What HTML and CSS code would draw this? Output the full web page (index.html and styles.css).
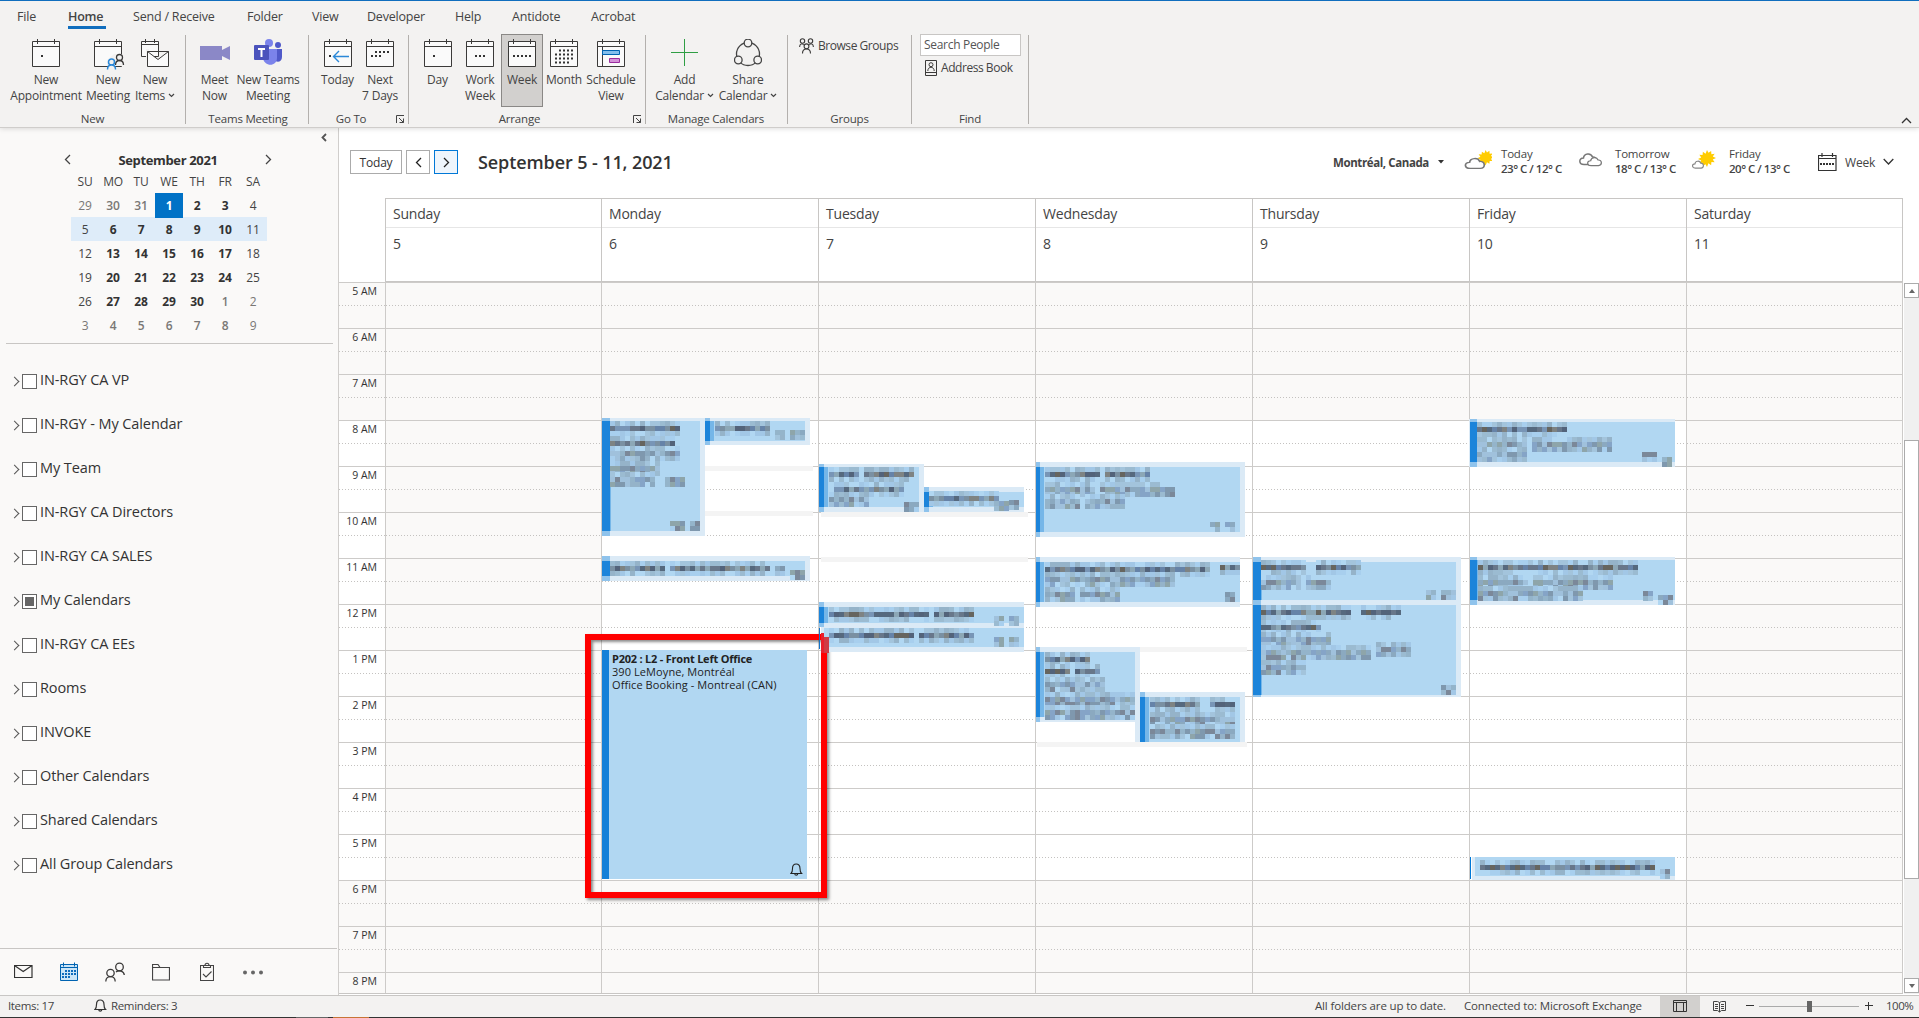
FILE: index.html
```html
<!DOCTYPE html>
<html lang="en">
<head>
<meta charset="utf-8">
<title>Calendar</title>
<link rel="stylesheet" href="styles.css">
</head>
<body>
<svg class="defs" width="0" height="0">
  <defs>
    <g id="cal"><path d="M.5 2.5h27v25h-27z" fill="#fafafa"/><path d="M.5 2.5h27v25h-27zM.5 7.5h27M5.5 0v5M22.5 0v5" fill="none" stroke="#3b3a39"/></g>
    <g id="person"><circle cx="4.500" cy="3.500" r="3"/><path d="M.5 11c0-6 8-6 8 0"/></g>
    <g id="bell"><path d="M1 10.500h10.500c-1.500-1.300-1.500-3-1.500-5C10 2.500 8.500 1 6.200 1S2.500 2.500 2.500 5.500c0 2 0 3.700-1.500 5zM4.700 10.800c.2 1.800 2.900 1.800 3.100 0"/></g>
    <g id="launch"><path d="M.5 8V.5H8M3 3l4.500 4.500M7.500 3.500v4h-4" fill="none" stroke="#444"/></g>
    <path id="caret" d="M1 1l2.500 2.500L6 1" fill="none" stroke="#444" stroke-width="1.200"/>
    <path id="sun" d="M10 0l1.600 3.100L14.600 1l.3 3.600 3.600-.3-2.100 3L20 9l-3.600 1.600 2.100 3-3.600-.3-.3 3.600-3-2.100L10 19l-1.600-3.200-3 2.100-.3-3.600-3.600.3 2.100-3L0 10l3.600-1.700-2.100-3 3.600.3.3-3.600 3 2.100z" fill="#fc0"/>
    <path id="cloud" d="M5 15.500C-.5 15.500-.5 9 4.500 9 5 4 12 3.500 13.500 8c5-.5 5.500 7 .5 7.500z"/>
  </defs>
</svg>

<div class="app">
<header class="ribbon">
  <nav class="tabs">
    <span class="tab t-file">File</span><span class="tab t-home active">Home</span><span class="tab t-send">Send / Receive</span><span class="tab t-folder">Folder</span><span class="tab t-view">View</span><span class="tab t-dev">Developer</span><span class="tab t-help">Help</span><span class="tab t-anti">Antidote</span><span class="tab t-acro">Acrobat</span>
  </nav>
  <div class="groups">
    <section class="group g-new">
      <div class="buttons">
        <div class="btn w74"><svg width="28" height="30"><use href="#cal"/><rect x="9" y="16" width="2" height="2" fill="#333"/></svg><span>New<br>Appointment</span></div>
        <div class="btn w52"><svg width="28" height="30" overflow="visible"><use href="#cal"/><path d="M20 15h10v12H13v-6z" fill="#f3f2f1"/><g fill="none" stroke="#3b3a39" stroke-width="1.300"><use href="#person" x="21" y="15"/></g><g fill="#f3f2f1" stroke="#2b88d8" stroke-width="1.500"><use href="#person" x="13" y="19.500"/></g></svg><span>New<br>Meeting</span></div>
        <div class="btn w42"><svg width="28" height="30"><path d="M.5 2.500h17v15H.5zM.5 5.500h17M4.500 0v4M13.500 0v4" fill="#fafafa" stroke="#3b3a39"/><path d="M5 10h3v9H5z" fill="#f3f2f1"/><path d="M6.500 12.500h21v15h-21zl10.500 8 10.500-8" fill="#fafafa" stroke="#3b3a39"/></svg><span>New<br>Items <svg class="car" width="7" height="5"><use href="#caret"/></svg></span></div>
      </div>
      <div class="caption">New</div>
    </section>
    <section class="group g-teams">
      <div class="buttons">
        <div class="btn w37"><svg width="30" height="30"><path d="M0 7h22v4l8-4v14l-8-4v4H0z" fill="#8b88c7"/></svg><span>Meet<br>Now</span></div>
        <div class="btn w70"><svg width="28" height="30"><circle cx="24" cy="6" r="3" fill="#5059c9"/><circle cx="15" cy="4" r="4" fill="#7b83eb"/><path d="M18 10h10v8c0 5-5 6-8 3z" fill="#5059c9"/><path d="M8 10h15v9c0 9-13 9-14 0z" fill="#7b83eb"/><rect y="6" width="15" height="15" rx="1" fill="#4b53bc"/><path d="M4 10h7M7.500 10v8" stroke="#fff" stroke-width="2" fill="none"/></svg><span>New Teams<br>Meeting</span></div>
      </div>
      <div class="caption">Teams Meeting</div>
    </section>
    <section class="group g-goto">
      <div class="buttons">
        <div class="btn w43"><svg width="28" height="30"><use href="#cal"/><rect x="5" y="16" width="2" height="2" fill="#333"/><path d="M25 17.500H9.500M15 12l-5.500 5.500L15 23" fill="none" stroke="#2b88d8" stroke-width="1.400"/></svg><span>Today</span></div>
        <div class="btn w42"><svg width="28" height="30"><use href="#cal"/><path d="M9 13h14M5 17h10" stroke="#333" stroke-width="2" stroke-dasharray="2 2"/></svg><span>Next<br>7 Days</span></div>
      </div>
      <div class="caption">Go To</div><svg class="launch" width="9" height="9"><use href="#launch"/></svg>
    </section>
    <section class="group g-arrange">
      <div class="buttons">
        <div class="btn w43"><svg width="28" height="30"><use href="#cal"/><rect x="9" y="16" width="2" height="2" fill="#333"/></svg><span>Day</span></div>
        <div class="btn w42"><svg width="28" height="30"><use href="#cal"/><path d="M9 17h10" stroke="#333" stroke-width="2" stroke-dasharray="2 2"/></svg><span>Work<br>Week</span></div>
        <div class="btn w42 pressed"><svg width="28" height="30"><use href="#cal"/><path d="M5 17h18" stroke="#333" stroke-width="2" stroke-dasharray="2 2"/></svg><span>Week</span></div>
        <div class="btn w42"><svg width="28" height="30"><use href="#cal"/><path d="M9 11.500h14M5 15.500h18M5 19.500h18M5 23.500h14" stroke="#333" stroke-width="2" stroke-dasharray="2 2"/></svg><span>Month</span></div>
        <div class="btn w52"><svg width="28" height="30"><use href="#cal"/><path d="M5.500 8v19" stroke="#3b3a39"/><path d="M5.500 11.500h17v4h-17z" fill="#83beec" stroke="#0063b1"/><path d="M12.500 19.500h10v4h-10z" fill="#d592d8" stroke="#9a2c9f"/></svg><span>Schedule<br>View</span></div>
      </div>
      <div class="caption">Arrange</div><svg class="launch" width="9" height="9"><use href="#launch"/></svg>
    </section>
    <section class="group g-manage">
      <div class="buttons">
        <div class="btn w63"><svg width="28" height="30"><path d="M13.500 0v27M0 13.500h27" stroke="#2f9e44" fill="none"/></svg><span>Add<br>Calendar <svg class="car" width="7" height="5"><use href="#caret"/></svg></span></div>
        <div class="btn w64"><svg width="28" height="30"><g fill="#f3f2f1" stroke="#444" stroke-width="1.300"><circle cx="14" cy="15" r="11.500"/><circle cx="14" cy="4" r="3.800"/><circle cx="4.300" cy="21" r="3.800"/><circle cx="23.700" cy="21" r="3.800"/></g></svg><span>Share<br>Calendar <svg class="car" width="7" height="5"><use href="#caret"/></svg></span></div>
      </div>
      <div class="caption">Manage Calendars</div>
    </section>
    <section class="group g-groups">
      <div class="line browse"><svg width="15" height="16"><g fill="none" stroke="#3b3a39" stroke-width="1.100"><circle cx="3.500" cy="3" r="2.200"/><circle cx="11.500" cy="3" r="2.200"/><path d="M.6 9c0-3.500 3-4 4-2M14.400 9c0-3.500-3-4-4-2"/><circle cx="7.500" cy="8.300" r="2.400"/><path d="M3.500 15.500c0-6 8-6 8 0"/></g></svg><span>Browse Groups</span></div>
      <div class="caption">Groups</div>
    </section>
    <section class="group g-find">
      <div class="search">Search People</div>
      <div class="line address"><svg width="12" height="16"><g fill="none" stroke="#3b3a39"><path d="M.5.500h11v15H.5zM.5 12.500h11"/><circle cx="6" cy="4.700" r="2"/><path d="M2.800 11c0-5 6.400-5 6.400 0"/></g></svg><span>Address Book</span></div>
      <div class="caption">Find</div>
    </section>
    <svg class="fold" width="11" height="7"><path d="M1 6l4.500-4.500L10 6" fill="none" stroke="#333" stroke-width="1.300"/></svg>
  </div>
</header>

<main class="main">
  <aside class="side">
    <svg class="hide" width="6" height="9"><path d="M5 1L1.500 4.500 5 8" fill="none" stroke="#555" stroke-width="1.800"/></svg>
    <div class="mini">
      <div class="mini-head"><svg width="7" height="11"><path d="M6 1L1.500 5.500 6 10" fill="none" stroke="#444" stroke-width="1.300"/></svg><b>September 2021</b><svg width="7" height="11"><path d="M1 1l4.500 4.500L1 10" fill="none" stroke="#444" stroke-width="1.300"/></svg></div>
      <div class="days"><span>SU</span><span>MO</span><span>TU</span><span>WE</span><span>TH</span><span>FR</span><span>SA</span></div>
      <div class="wk"><i>29</i><i class="b">30</i><i class="b">31</i><b class="now">1</b><b>2</b><b>3</b><span>4</span></div>
      <div class="wk sel"><span>5</span><b>6</b><b>7</b><b>8</b><b>9</b><b>10</b><span>11</span></div>
      <div class="wk"><span>12</span><b>13</b><b>14</b><b>15</b><b>16</b><b>17</b><span>18</span></div>
      <div class="wk"><span>19</span><b>20</b><b>21</b><b>22</b><b>23</b><b>24</b><span>25</span></div>
      <div class="wk"><span>26</span><b>27</b><b>28</b><b>29</b><b>30</b><i class="b">1</i><i>2</i></div>
      <div class="wk"><i>3</i><i class="b">4</i><i class="b">5</i><i class="b">6</i><i class="b">7</i><i class="b">8</i><i>9</i></div>
    </div>
    <ul class="tree">
      <li>IN-RGY CA VP</li><li>IN-RGY - My Calendar</li><li>My Team</li><li>IN-RGY CA Directors</li><li>IN-RGY CA SALES</li><li class="part">My Calendars</li><li>IN-RGY CA EEs</li><li>Rooms</li><li>INVOKE</li><li>Other Calendars</li><li>Shared Calendars</li><li>All Group Calendars</li>
    </ul>
    <div class="modules">
      <svg width="19" height="20"><path d="M.5 3.500h17.500v12H.5zl8.700 6L18 3.500" fill="none" stroke="#333" stroke-width="1.200"/></svg>
      <svg width="18" height="20"><path d="M.5 2.500h17v16H.5z" fill="#cce6f8" stroke="#0063b1"/><path d="M.5 5.500h17M3.500.500v4M14.500.500v4" stroke="#0063b1" fill="none"/><path d="M5 9h11M2 12h14M2 15h9" stroke="#0f6cbd" stroke-width="1.800" stroke-dasharray="2 1"/></svg>
      <svg width="20" height="20"><g fill="none" stroke="#3b3a39" stroke-width="1.300"><circle cx="5.500" cy="11" r="3.700"/><path d="M.8 19.500c0-6.500 9.400-6.500 9.400 0"/><circle cx="14.500" cy="5" r="3.800"/><path d="M11 10c3-2.500 8-1 8.300 3"/></g></svg>
      <svg width="18" height="20"><path d="M.5 5.500v12.500h17V5.500H8l-2-3H.5zM.5 5.500H8" fill="none" stroke="#444" stroke-width="1.200"/></svg>
      <svg class="tasks" width="14" height="20"><path d="M.5 3.500h13v15H.5zM3.500 5.500v-2H5c0-3 4-3 4 0h1.500v2zM3 12l3 3 5.500-5.500" fill="none" stroke="#444" stroke-width="1.100"/></svg>
      <svg class="more" width="20" height="20"><g fill="#666"><circle cx="2" cy="10.500" r="2"/><circle cx="10" cy="10.500" r="2"/><circle cx="18" cy="10.500" r="2"/></g></svg>
    </div>
  </aside>

  <section class="cal">
    <div class="bar">
      <span class="box today">Today</span>
      <span class="box arrow"><svg width="7" height="11"><path d="M6 1L1.500 5.500 6 10" fill="none" stroke="#222" stroke-width="1.300"/></svg></span>
      <span class="box arrow hot"><svg width="7" height="11"><path d="M1 1l4.500 4.500L1 10" fill="none" stroke="#222" stroke-width="1.300"/></svg></span>
      <h1>September 5 - 11, 2021</h1>
      <span class="place">Montréal, Canada</span><svg class="drop" width="6" height="4"><path d="M0 0h6L3 3.500z" fill="#333"/></svg>
      <div class="wx"><svg width="28" height="20"><use href="#sun" x="11.500" y="0" transform="translate(4 0) scale(.82)"/><g fill="#fff" stroke="#777" stroke-width="1.500"><use href="#cloud" transform="translate(.5 4) scale(1.130 .93)"/></g></svg><span>Today<br><b>23° C / 12° C</b></span></div>
      <div class="wx"><svg width="28" height="20"><g fill="#fff" stroke="#777" stroke-width="1.500"><use href="#cloud" transform="translate(1 -1)"/><use href="#cloud" transform="translate(9 4) scale(.82 .75)"/></g></svg><span>Tomorrow<br><b>18° C / 13° C</b></span></div>
      <div class="wx"><svg width="28" height="20"><use href="#sun" transform="translate(6 0) scale(.9)"/><g fill="#fff" stroke="#888" stroke-width="1.800"><use href="#cloud" transform="translate(0 8) scale(.65)"/></g></svg><span>Friday<br><b>20° C / 13° C</b></span></div>
      <div class="view"><svg width="19" height="20"><path d="M.5 3.500h17.500v15H.5zM.5 6.500h17.500M4 1v4M14.500 1v4" fill="none" stroke="#333" stroke-width="1.200"/><path d="M2 12h14" stroke="#333" stroke-width="2" stroke-dasharray="2 1"/></svg><span>Week</span><svg width="11" height="8"><path d="M.7 1l4.800 5 4.800-5" fill="none" stroke="#333" stroke-width="1.300"/></svg></div>
    </div>
    <div class="heads">
      <div><span>Sunday</span><em>5</em></div><div><span>Monday</span><em>6</em></div><div><span>Tuesday</span><em>7</em></div><div><span>Wednesday</span><em>8</em></div><div><span>Thursday</span><em>9</em></div><div><span>Friday</span><em>10</em></div><div><span>Saturday</span><em>11</em></div>
    </div>
    <div class="body">
      <div class="slots">
        <div class="hours"><span>5 AM</span><span>6 AM</span><span>7 AM</span><span>8 AM</span><span>9 AM</span><span>10 AM</span><span>11 AM</span><span>12 PM</span><span>1 PM</span><span>2 PM</span><span>3 PM</span><span>4 PM</span><span>5 PM</span><span>6 PM</span><span>7 PM</span><span>8 PM</span></div>
        <div class="col"></div><div class="col open"></div><div class="col open"></div><div class="col open"></div><div class="col open"></div><div class="col open"></div><div class="col"></div>
        <div class="booking"><b>P202 : L2 - Front Left Office</b><span>390 LeMoyne, Montréal</span><span>Office Booking - Montreal (CAN)</span><svg width="13" height="14" fill="none" stroke="#222" stroke-width="1.100"><use href="#bell"/></svg></div>
        <div class="frame"></div>
        <svg class="redacted" id="redacted" viewBox="339 282 1564 712" width="1564" height="712" shape-rendering="crispEdges"></svg>
      </div>
      <div class="scroll"><span class="up"></span><span class="thumb"></span><span class="down"></span></div>
    </div>
  </section>
</main>

<footer class="status">
  <span class="items">Items: 17</span>
  <svg class="sbell" width="13" height="14" fill="none" stroke="#333" stroke-width="1.200"><use href="#bell"/></svg><span class="rem">Reminders: 3</span>
  <span class="sync">All folders are up to date.</span><span class="conn">Connected to: Microsoft Exchange</span>
  <span class="mode"><svg width="14" height="12"><path d="M.5.500h13v11H.5zM.5 2.500h13M3.500 2.500v9M10.500 2.500v9" fill="none" stroke="#333"/></svg></span>
  <svg class="read" width="13" height="13"><path d="M.5 1.500h4l2 1 2-1h4v9h-4l-2 1.500-2-1.500h-4zM6.500 2.500V12M2 4.500h3M2 6.500h3M2 8.500h3M8 4.500h3M8 6.500h3M8 8.500h3" fill="none" stroke="#444"/></svg>
  <svg class="zoomer" width="128" height="12"><path d="M0 5.500h8M119 5.500h8M122.500 2v8" stroke="#333" fill="none"/><path d="M13 6.500h100" stroke="#aaa"/><path d="M61 1h5v11h-5z" fill="#666"/></svg>
  <span class="pct">100%</span>
</footer>
<div class="edge"></div>
</div>
<script src="events.js"></script>
</body>
</html>
```
FILE: styles.css
```css
* { box-sizing: border-box; }
body { margin: 0; width: 1919px; height: 1018px; overflow: hidden; background: #fff; color: #444; font-family: "Open Sans", "Noto Sans", sans-serif; font-size: 12px; letter-spacing: -0.2px; }
.defs { position: absolute; }
svg { display: block; flex: none; }
.app { display: flex; flex-direction: column; height: 1018px; }

.ribbon { height: 128px; background: #f3f2f1; border-top: 1px solid #106ebe; border-bottom: 1px solid #cfcdcb; box-shadow: 0 1px 5px rgba(0,0,0,.13); position: relative; z-index: 2; flex: none; }
.tabs { height: 33px; display: flex; padding-left: 17px; font-size: 12.500px; }
.tab { line-height: 32px; white-space: nowrap; flex: none; }
.t-file { width: 51px; } .t-home { width: 38px; margin-right: 27px; } .t-send { width: 114px; } .t-folder { width: 65px; } .t-view { width: 55px; } .t-dev { width: 88px; } .t-help { width: 57px; } .t-anti { width: 79px; }
.active { font-weight: 600; height: 28px; border-bottom: 3px solid #106ebe; }
.groups { display: flex; height: 93px; position: relative; }
.group { position: relative; height: 89px; margin-top: 1px; border-right: 1px solid #b3b0ad; display: flex; flex-direction: column; justify-content: space-between; }
.g-new { width: 186px; padding-left: 8px; } .g-teams { width: 123px; padding-left: 10px; } .g-goto { width: 100px; padding-left: 7px; } .g-arrange { width: 237px; padding-left: 7px; } .g-manage { width: 142px; padding-left: 7px; } .g-groups { width: 124px; padding-left: 11px; } .g-find { width: 117px; padding-left: 8px; }
.buttons { display: flex; margin-top: -1px; }
.btn { height: 73px; display: flex; flex-direction: column; align-items: center; padding-top: 5px; text-align: center; line-height: 16px; white-space: nowrap; border: 0 solid #8a8886; }
.btn span { margin-top: 3px; }
.pressed { background: #d2d0ce; border-width: 1px; padding-top: 4px; }
.car { display: inline-block; vertical-align: 2px; }
.w74 { width: 74px; padding-left: 2px; } .w52 { width: 52px; } .w42 { width: 42px; } .w37 { width: 37px; } .w70 { width: 70px; } .w43 { width: 43px; } .w63 { width: 63px; } .w64 { width: 64px; }
.caption { text-align: center; line-height: 14px; font-size: 11.500px; height: 12px; margin-top: auto; margin-left: -8px; }
.g-goto .caption, .g-arrange .caption { margin-right: 14px; }
.g-groups .caption { margin-right: 3px; }
.launch { position: absolute; right: 3px; bottom: 0; }
.line { display: flex; align-items: center; gap: 4px; white-space: nowrap; letter-spacing: -.45px; }
.browse { margin-top: 2px; }
.search { width: 101px; height: 22px; background: #fff; border: 1px solid #c8c6c4; line-height: 20px; padding-left: 3px; color: #555; margin-top: -1px; letter-spacing: -.3px; }
.address { margin: 3px 0 0 5px; gap: 4px; }
.fold { position: absolute; left: 1901px; top: 83px; }

.main { display: flex; height: 867px; flex: none; }
.side { width: 338px; background: #faf9f8; position: relative; display: flex; flex-direction: column; flex: none; }
.hide { position: absolute; left: 321px; top: 5px; }
.mini { padding: 22px 0 0 71px; height: 215px; margin: 0 5px 0 0; flex: none; }
.mini-head { display: flex; justify-content: space-between; align-items: center; width: 208px; margin-left: -7px; height: 19px; font-size: 13px; color: #333; letter-spacing: -.35px; }
.days, .wk { display: grid; grid-template-columns: repeat(7, 28px); width: 196px; text-align: center; line-height: 25px; height: 24px; color: #444; }
.mini .mini-head b, .mini .wk b { font-weight: 700; color: #333; }
.mini i { font-style: normal; color: #797775; }
.mini i.b { font-weight: 600; }
.sel { background: #deecf9; }
.mini .wk .now { background: #0072c6; color: #fff; }
.tree { list-style: none; margin: 0 5px 0 6px; padding: 14px 0 0 7px; border-top: 1px solid #c8c6c4; height: 605px; font-size: 14.500px; letter-spacing: -0.1px; color: #333; flex: none; }
.tree li { height: 44px; line-height: 44px; padding-left: 27px; position: relative; }
.tree li::before { content: ""; position: absolute; left: 9px; top: 16px; width: 13px; height: 13px; border: 1px solid #666; background: #fff; }
.tree li::after { content: ""; position: absolute; left: -2px; top: 20px; width: 6px; height: 6px; border: solid #555; border-width: 1.500px 1.500px 0 0; transform: rotate(45deg); }
.tree .part::before { background: #666; box-shadow: inset 0 0 0 2px #fff; }
.modules { border-top: 1px solid #c8c6c4; flex: 1; display: flex; align-items: flex-start; padding: 13px 0 0 14px; margin-right: 1px; gap: 27px; }
.tasks { margin-left: 3px; }
.more { margin-left: 2px; }

.cal { width: 1581px; border-left: 1px solid #d0cecc; display: flex; flex-direction: column; }
.bar { height: 70px; display: flex; align-items: center; padding: 0 0 2px 11px; flex: none; }
.box { height: 24px; border: 1px solid #ababab; display: flex; align-items: center; justify-content: center; background: #fff; color: #333; }
.today { width: 52px; margin-right: 4px; }
.arrow { width: 24px; margin-right: 4px; }
.hot { background: #eef5fc; border-color: #0078d7; }
h1 { font-size: 18px; font-weight: 600; line-height: 24px; margin: 0 0 0 16px; color: #333; width: 855px; white-space: nowrap; letter-spacing: -.1px; }
.place { font-weight: 700; font-size: 11.500px; width: 105px; white-space: nowrap; letter-spacing: -.4px; color: #444; }
.drop { margin-right: 20px; }
.wx { display: flex; width: 114px; line-height: 15px; white-space: nowrap; font-size: 11.500px; margin-top: -2px; }
.wx svg { margin-right: 9px; margin-top: 4px; }
.wx b { font-weight: 600; letter-spacing: -.5px; }
.view { display: flex; align-items: center; gap: 8px; margin-left: 12px; }
.heads { margin-left: 46px; width: 1518px; height: 85px; border: 1px solid #c8c6c4; border-bottom-width: 2px; display: grid; grid-template-columns: 215px repeat(5, 217px) 216px; font-size: 14px; flex: none; }
.heads div { border-left: 1px solid #c8c6c4; }
.heads div:first-child { border-left: 0; }
.heads span, .heads em { display: block; font-style: normal; padding-left: 7px; height: 29px; line-height: 29px; border-bottom: 1px solid #e6e6e6; }
.heads em { border: 0; line-height: 31px; }
.body { display: flex; height: 712px; margin-top: -1px; }
.slots { width: 1564px; position: relative; display: grid; grid-template-columns: 47px 216px repeat(5, 217px) 216px; border-bottom: 1px solid #c8c6c4; }
.hours, .col { position: relative; overflow: hidden; border-right: 1px solid #cdcbc9; background: linear-gradient(#cdcbc9 1px, transparent 1px) 0 0 / 100% 46px, #faf9f8; }
.hours::before, .col::before { content: ""; position: absolute; inset: 0; background: linear-gradient(#c4c2c0 1px, transparent 1px) 0 23px / 3px 46px; -webkit-mask: linear-gradient(90deg, #000 1px, transparent 1px) 0 0 / 3px 100%; mask: linear-gradient(90deg, #000 1px, transparent 1px) 0 0 / 3px 100%; }
.hours, .open { background: linear-gradient(#cdcbc9 1px, transparent 1px) 0 0 / 100% 46px, linear-gradient(#faf9f8 138px, #fff 138px, #fff 598px, #faf9f8 598px); }
.hours span { display: block; height: 46px; line-height: 18px; text-align: right; padding-right: 8px; font-size: 10.500px; letter-spacing: 0; position: relative; color: #333; }

.booking { position: absolute; left: 263px; top: 368px; width: 205px; height: 229px; background: #b1d7f2; border-left: 7px solid #1480d8; padding: 2px 0 0 3px; color: #222; font-size: 11px; line-height: 13px; letter-spacing: .08px; white-space: nowrap; }
.booking b, .booking span { display: block; }
.booking b { font-weight: 700; letter-spacing: -.22px; }
.booking svg { position: absolute; right: 4px; bottom: 2px; }
.frame { position: absolute; left: 246px; top: 352px; width: 242px; height: 264px; border: 6px solid #f00; box-shadow: 2px 2px 3px rgba(0,0,0,.45), inset 2px 2px 3px rgba(0,0,0,.45); }
.redacted { position: absolute; left: 0; top: 0; }
.scroll { width: 15px; margin: 1px 0 0 1px; background: #f0f0f0; display: flex; flex-direction: column; }
.up, .down { height: 15px; border: 1px solid #ababab; background: #fff; display: flex; align-items: center; justify-content: center; }
.up::before, .down::before { content: ""; border: 3px solid transparent; border-top-width: 0; border-bottom: 4px solid #666; }
.down::before { transform: rotate(180deg); }
.thumb { margin-top: 142px; height: 439px; border: 1px solid #ababab; background: #fff; }
.down { margin-top: 99px; }

.status { height: 22px; border-top: 1px solid #c8c6c4; background: #f3f2f1; display: flex; align-items: center; padding: 0 0 1px 8px; font-size: 11.500px; letter-spacing: -.15px; flex: none; white-space: nowrap; line-height: 16px; }
.status span { flex: none; }
.items { width: 86px; letter-spacing: -.35px; } .sbell { margin-right: 4px; } .rem { width: 1204px; letter-spacing: -.35px; } .sync { width: 149px; } .conn { width: 196px; }
.mode { width: 40px; height: 21px; background: #d2d0ce; display: flex; align-items: center; justify-content: center; margin-right: 13px; }
.read { margin-right: 20px; } .zoomer { margin-right: 12px; }
.pct { letter-spacing: -.5px; }
.edge { height: 1px; flex: none; background: linear-gradient(90deg, #333 296px, #666 296px, #666 328px, #333 328px, #333 333px, #c77436 333px, #c77436 369px, #333 369px); }
```
FILE: events.js
```js
// Appointments whose details are hidden are drawn as pixelated blocks.
// box: [x, y, width, height, bar width]; lines: [x, y, length in cells, bold]
const events = [
  { box: [602, 421, 98, 110, 8], rim: [602, 418, 103, 118], lines: [[610, 426, 14, 1], [610, 441, 13, 1], [610, 451, 14, 0], [610, 466, 10, 0], [610, 477, 9, 0], [665, 477, 4, 0], [670, 521, 3, 0], [690, 521, 2, 0]] },
  { box: [705, 421, 100, 20, 5], rim: [705, 418, 105, 27], lines: [[715, 426, 11, 1], [775, 430, 2, 0], [790, 430, 3, 0]] },
  { box: [602, 561, 203, 15, 8], rim: [602, 556, 208, 25], lines: [[610, 566, 11, 1], [670, 566, 20, 1], [775, 566, 2, 0], [790, 570, 3, 0]] },
  { box: [819, 467, 100, 40, 5], rim: [819, 464, 105, 48], lines: [[829, 472, 6, 1], [864, 472, 10, 1], [834, 487, 14, 1], [829, 497, 8, 0], [904, 502, 3, 0]] },
  { box: [924, 492, 100, 15, 5], rim: [924, 487, 100, 25], lines: [[929, 496, 14, 1], [994, 501, 3, 0], [1009, 500, 2, 0]] },
  { box: [819, 607, 205, 16, 5], rim: [819, 602, 205, 25], lines: [[829, 612, 20, 1], [934, 612, 8, 1], [994, 616, 2, 0], [1009, 616, 2, 0]] },
  { box: [824, 628, 200, 19, 0], rim: [821, 627, 203, 25], lines: [[829, 633, 17, 1], [919, 633, 11, 1], [994, 637, 2, 0], [1009, 637, 2, 0]] },
  { box: [1036, 467, 204, 65, 4], rim: [1036, 462, 209, 75], lines: [[1045, 472, 11, 1], [1105, 472, 9, 1], [1045, 487, 10, 0], [1100, 487, 15, 0], [1045, 499, 7, 0], [1085, 499, 8, 0], [1210, 522, 2, 0], [1225, 522, 2, 0]] },
  { box: [1036, 562, 204, 40, 4], rim: [1036, 557, 204, 50], lines: [[1045, 567, 33, 1], [1220, 565, 4, 1], [1045, 577, 26, 0], [1045, 592, 6, 0], [1080, 592, 8, 0], [1225, 592, 2, 0]] },
  { box: [1036, 652, 99, 65, 4], rim: [1036, 647, 104, 75], lines: [[1045, 657, 9, 1], [1045, 669, 5, 1], [1075, 669, 5, 1], [1045, 682, 12, 0], [1045, 697, 18, 0], [1045, 710, 18, 0]] },
  { box: [1140, 697, 100, 45, 5], rim: [1135, 692, 110, 50], lines: [[1150, 702, 10, 1], [1210, 702, 5, 1], [1150, 717, 17, 0], [1150, 729, 17, 0]] },
  { box: [1253, 562, 203, 38, 8], rim: [1253, 557, 208, 48], lines: [[1261, 565, 9, 1], [1316, 565, 9, 1], [1261, 580, 8, 0], [1306, 580, 5, 0], [1426, 590, 2, 0], [1441, 590, 3, 0]] },
  { box: [1253, 605, 203, 90, 8], rim: [1253, 600, 208, 97], lines: [[1261, 610, 18, 1], [1361, 610, 8, 1], [1261, 625, 12, 1], [1261, 637, 14, 0], [1261, 650, 22, 0], [1376, 647, 7, 0], [1261, 665, 9, 0], [1441, 685, 3, 0]] },
  { box: [1470, 422, 205, 40, 7], rim: [1469, 419, 206, 48], lines: [[1477, 427, 18, 1], [1477, 442, 10, 0], [1532, 442, 16, 0], [1477, 452, 10, 0], [1642, 452, 3, 0], [1662, 457, 2, 0]] },
  { box: [1470, 560, 205, 40, 7], rim: [1470, 557, 205, 48], lines: [[1478, 565, 32, 1], [1478, 580, 10, 0], [1533, 580, 16, 0], [1478, 591, 21, 0], [1643, 591, 2, 0], [1658, 595, 3, 0]] },
  { box: [1475, 857, 200, 19, 0], rim: [1472, 857, 203, 23], lines: [[1480, 865, 35, 1], [1660, 869, 2, 0]] }
];

const svg = document.getElementById("redacted");
const strong = ["#56697e", "#68778a", "#7a90a2", "#66655f", "#7895b6", "#6683a8", "#8ca7b6", "#53637a", "#7e8383"];
const soft = ["#7f98ae", "#8ba9c0", "#94b4ca", "#7b8899", "#85a4c7", "#8ea5aa", "#a0c1dc"];
const faint = ["#9bbbd1", "#a3c4dc", "#b1d7f2", "#a8cfee", "#95b3c9", "#a2c7e6"];
let seed = 17;
const pick = (list) => {
  seed = (seed * 1103515245 + 12345) % 2147483648;
  return list[Math.floor(seed / 65536) % list.length];
};
const rect = (x, y, w, h, fill) => {
  const r = document.createElementNS("http://www.w3.org/2000/svg", "rect");
  Object.entries({ x, y, width: w, height: h, fill }).forEach(([k, v]) => r.setAttribute(k, v));
  svg.append(r);
};

// Faded hour lines around the pixelated areas
[[705, 466, 108], [705, 511, 108], [821, 512, 207], [821, 557, 207], [1037, 742, 210], [1140, 647, 107]].forEach(([x, y, w]) => rect(x, y, w, 5, "#f4f4f4"));

events.forEach(({ box: [x, y, w, h, bar], rim, lines }) => {
  rect(...rim, "#dbeaf6");
  rect(x, y, w, h, "#b1d7f2");
  if (bar) {
    rect(x, rim[1], bar, rim[3], "#8fc3ec");
    rect(x, y, bar, h, "#1c84da");
    rect(x + bar, y, bar < 6 ? 4 : 1, h, "#75b6e8");
  }
  lines.forEach(([lx, ly, cells, bold]) => {
    for (let i = 0; i < cells; i++) {
      if (cells > 4) rect(lx + i * 5, ly - 5, 5, 5, pick(faint));
      rect(lx + i * 5, ly, 5, 5, pick(bold ? strong : soft));
      rect(lx + i * 5, ly + 5, 5, 5, pick(bold ? faint : faint.concat(soft)));
    }
  });
});
rect(819, 628, 1, 21, "#1473c8");
rect(1470, 857, 1, 22, "#0078d7");
rect(821, 633, 3, 20, "#e8202c");
rect(824, 637, 5, 16, "#cf3c44");
```
